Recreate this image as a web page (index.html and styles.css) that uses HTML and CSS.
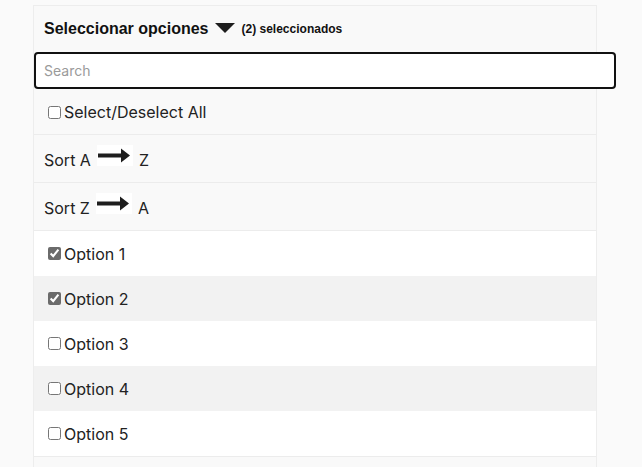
FILE: index.html
```html
<!DOCTYPE html>
<html lang="es">
<head>
  <meta charset="UTF-8">
  <title>Seleccionar opciones</title>
  <link rel="stylesheet" href="styles.css">
</head>
<body>
  <div class="dropdown">
    <div class="dropdown-header">
      <span class="dropdown-title">Seleccionar opciones</span>
      <svg class="caret" width="20" height="10" viewBox="0 0 20 10"><polygon points="0,0 20,0 10,10" fill="#1e1e1e"/></svg>
      <span class="dropdown-count">(2) seleccionados</span>
    </div>

    <input type="text" class="search" placeholder="Search">

    <div class="row row-all">
      <label><input type="checkbox"> Select/Deselect All</label>
    </div>

    <div class="row row-sort">
      <span>Sort A</span>
      <svg class="arrow" width="36" height="21" viewBox="0 0 36 21"><rect width="36" height="21" fill="#fff"/><path d="M1 8.5 H24 V3.5 L33 10.5 L24 17.5 V12.5 H1 Z" fill="#1e1e1e"/></svg>
      <span>Z</span>
    </div>
    <div class="row row-sort">
      <span>Sort Z</span>
      <svg class="arrow" width="36" height="21" viewBox="0 0 36 21"><rect width="36" height="21" fill="#fff"/><path d="M1 8.5 H24 V3.5 L33 10.5 L24 17.5 V12.5 H1 Z" fill="#1e1e1e"/></svg>
      <span>A</span>
    </div>

    <div class="option"><label><input type="checkbox" checked> Option 1</label></div>
    <div class="option"><label><input type="checkbox" checked> Option 2</label></div>
    <div class="option"><label><input type="checkbox"> Option 3</label></div>
    <div class="option"><label><input type="checkbox"> Option 4</label></div>
    <div class="option"><label><input type="checkbox"> Option 5</label></div>

    <div class="dropdown-footer"></div>
  </div>
</body>
</html>
```

FILE: styles.css
```css
body {
  margin: 0;
  background-color: #fafafa;
  font-family: Inter, "Noto Sans", sans-serif;
  color: #222;
}

.dropdown {
  width: 562px;
  margin: 5px 0 0 33px;
  border: 1px solid #ededed;
  border-bottom: none;
  background-color: #f9f9f9;
}

.dropdown-header {
  display: flex;
  align-items: center;
  height: 46px;
  padding: 0 10px;
  font-family: "Liberation Sans", Arial, sans-serif;
  font-weight: bold;
  color: #111;
}

.dropdown-title {
  font-size: 16px;
}

.caret {
  margin: 0 7px 3px 6px;
}

.dropdown-count {
  font-size: 12px;
}

.search {
  display: block;
  width: 100%;
  height: 33px;
  padding: 0 8px;
  margin: 0;
  border: 2px solid #111;
  border-radius: 4px;
  background-color: #fff;
  font-family: Inter, sans-serif;
  font-size: 14px;
  color: #222;
  outline: none;
}

.search::placeholder {
  color: #9a9a9a;
}

.row {
  display: flex;
  align-items: center;
  box-sizing: border-box;
  padding: 0 10px;
  border-bottom: 1px solid #ececec;
  font-size: 16px;
}

.row-all {
  height: 46px;
  padding-top: 1px;
}

.row-sort {
  height: 48px;
  padding-top: 2px;
}

.arrow {
  margin: 0 6px 8px 6px;
}

label {
  display: flex;
  align-items: center;
}

input[type="checkbox"] {
  width: 13px;
  height: 13px;
  margin: 0 3px 0 4px;
  accent-color: #6b6b6b;
}

.option {
  display: flex;
  align-items: center;
  height: 45px;
  padding: 0 10px;
  font-size: 16px;
  background-color: #fff;
}

.option:nth-of-type(even) {
  background-color: #f2f2f2;
}

.dropdown-footer {
  height: 20px;
  border-top: 1px solid #ececec;
}
```
